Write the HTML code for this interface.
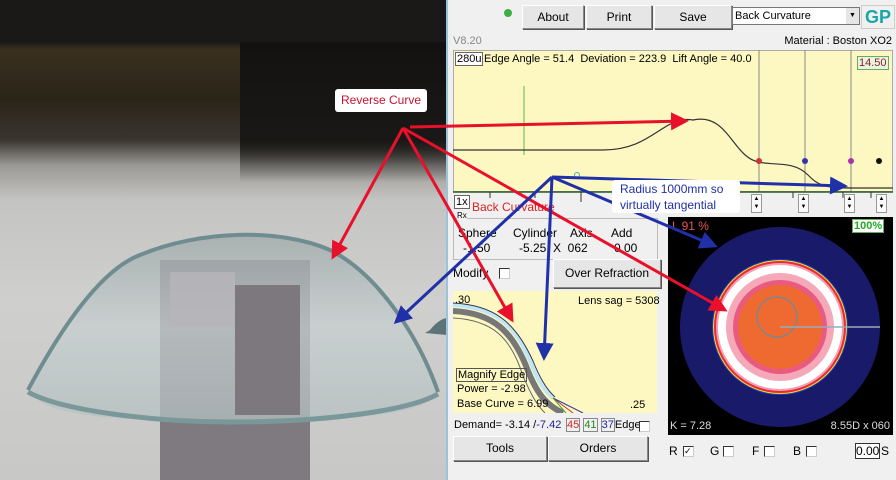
<!DOCTYPE html>
<html><head><meta charset="utf-8"><style>
body{margin:0;width:896px;height:480px;overflow:hidden;background:#f0f0f0;font-family:"Liberation Sans",sans-serif;position:relative}
.a{position:absolute}
.btn{position:absolute;background:#e6e6e6;border:1px solid #fff;border-right-color:#888;border-bottom-color:#888;box-shadow:1px 1px 0 #555;font-size:12px;text-align:center;color:#000}
.t{position:absolute;font-size:11px;color:#000;white-space:nowrap}
.cb{position:absolute;width:9px;height:9px;border:1px solid #333;border-right-color:#ccc;border-bottom-color:#ccc;background:#fff}
.sp{position:absolute;width:9px;height:17px;background:#fafafa;border:1px solid #999;font-size:6px;line-height:8px;text-align:center}
</style></head><body>
<!-- photo -->
<div class="a" style="left:0;top:0;width:447px;height:480px;background:linear-gradient(180deg,#1b1917 0,#1b1917 42px,#3a3020 50px,#2a2418 100px,#3a3630 140px,#9a9894 165px,#c4c4c2 200px,#cfcfcd 300px,#c8c8c6 480px)"></div>
<div class="a" style="left:240px;top:42px;width:207px;height:140px;background:linear-gradient(180deg,#141210,#1a1816 70%,rgba(60,60,60,0))"></div>
<svg class="a" style="left:0;top:0" width="447" height="480">
<defs><linearGradient id="dm" x1="0" y1="0" x2="0" y2="1"><stop offset="0" stop-color="#9fa9aa"/><stop offset=".5" stop-color="#c6cfd0"/><stop offset="1" stop-color="#b5c0c1"/></linearGradient></defs>
<rect x="160" y="260" width="150" height="220" fill="#7f7a80"/>
<path d="M28 390 C60 330 100 270 140 255 C200 230 280 228 330 250 C380 275 420 340 438 392 C430 410 380 418 300 420 L160 420 C80 418 40 410 28 390Z" fill="url(#dm)" opacity=".75"/>
<path d="M28 390 C60 330 100 270 140 255 C200 230 280 228 330 250 C380 275 420 340 438 392" fill="none" stroke="#6f8c90" stroke-width="4"/>
<path d="M28 392 C60 410 150 422 230 422 C330 422 410 410 438 394" fill="none" stroke="#7a989a" stroke-width="5"/>
<rect x="170" y="272" width="65" height="55" fill="#b7b5ba" opacity=".8"/>
<rect x="235" y="285" width="65" height="130" fill="#7d787e"/>
<path d="M430 330 C438 320 445 318 447 318 L447 335 L425 333Z" fill="#5c7478"/>
</svg>
<div class="a" style="left:446px;top:0;width:2px;height:480px;background:#9cc3d9"></div>
<!-- software panel -->
<div class="a" style="left:504px;top:9px;width:8px;height:8px;border-radius:50%;background:#3cb043"></div>
<div class="btn" style="left:522px;top:5px;width:60px;height:22px;line-height:22px">About</div>
<div class="btn" style="left:586px;top:5px;width:64px;height:22px;line-height:22px">Print</div>
<div class="btn" style="left:654px;top:5px;width:76px;height:22px;line-height:22px">Save</div>
<div class="a" style="left:732px;top:7px;width:124px;height:16px;background:#fff;border:1px solid #777;font-size:11px;line-height:16px;padding-left:2px">Back Curvature<span style="position:absolute;right:0;top:0;width:13px;height:16px;background:#e6e6e6;font-size:7px;text-align:center">▼</span></div>
<div class="a" style="left:861px;top:5px;width:32px;height:22px;border:1px solid #ccc;color:#1aa6a6;font-weight:bold;font-size:18px;line-height:22px;text-align:center">GP</div>
<div class="t" style="left:453px;top:35px;color:#888">V8.20</div>
<div class="t" style="right:4px;top:35px">Material : Boston XO2</div>
<!-- graph -->
<div class="a" style="left:453px;top:50px;width:440px;height:142px;background:#fdf8c2;border:1px solid #aaa;box-sizing:border-box"></div>
<svg class="a" style="left:453px;top:50px" width="440" height="165">
<line x1="71" y1="36" x2="71" y2="105" stroke="#8fd06f" stroke-width="1.5"/>
<line x1="306" y1="0" x2="306" y2="142" stroke="#888"/><line x1="352" y1="0" x2="352" y2="142" stroke="#888"/><line x1="398" y1="0" x2="398" y2="142" stroke="#888"/>
<path d="M0 100 L150 100 C200 100 210 65 240 70 C275 62 280 108 306 112 C320 116 340 110 355 125 C365 135 370 138 400 138 L440 138" fill="none" stroke="#333" stroke-width="1.2"/>
<circle cx="306" cy="111" r="3" fill="#c33"/><circle cx="352" cy="111" r="3" fill="#33a"/><circle cx="398" cy="111" r="3" fill="#a3a"/><circle cx="426" cy="111" r="3" fill="#111"/>
<circle cx="124" cy="125" r="2.5" fill="none" stroke="#5aa"/>
<line x1="0" y1="142" x2="440" y2="142" stroke="#2a5a2a" stroke-width="1.5"/>
<g stroke="#333"><line x1="37" y1="142" x2="37" y2="148"/><line x1="82" y1="142" x2="82" y2="148"/><line x1="128" y1="142" x2="128" y2="152"/><line x1="340" y1="142" x2="340" y2="148"/><line x1="390" y1="142" x2="390" y2="148"/><line x1="418" y1="142" x2="418" y2="148"/></g>
</svg>
<div class="t" style="left:455px;top:52px;border:1px solid #666;background:#fff;padding:0 1px">280u</div>
<div class="t" style="left:484px;top:53px">Edge Angle = 51.4 &nbsp;Deviation = 223.9 &nbsp;Lift Angle = 40.0</div>
<div class="t" style="left:857px;top:56px;border:1px solid #6a6;background:#e8f4e0;color:#822;padding:0 1px">14.50</div>
<div class="t" style="left:454px;top:195px;border:1px solid #666;background:#fff;padding:0 1px">1x</div>
<div class="t" style="left:472px;top:200px;color:#d22;font-size:12px">Back Curvature</div>
<div class="sp" style="left:751px;top:194px">▲<br>▼</div><div class="sp" style="left:798px;top:194px">▲<br>▼</div><div class="sp" style="left:844px;top:194px">▲<br>▼</div><div class="sp" style="left:876px;top:194px">▲<br>▼</div>
<!-- Rx -->
<div class="a" style="left:453px;top:218px;width:203px;height:40px;border:1px solid #bbb"></div>
<div class="t" style="left:457px;top:211px;font-size:8px;background:#f0f0f0">Rx</div>
<div class="t" style="left:458px;top:226px;font-size:12px">Sphere</div><div class="t" style="left:513px;top:226px;font-size:12px">Cylinder</div><div class="t" style="left:570px;top:226px;font-size:12px">Axis</div><div class="t" style="left:611px;top:226px;font-size:12px">Add</div>
<div class="t" style="left:463px;top:241px;font-size:12px">-1.50</div><div class="t" style="left:519px;top:241px;font-size:12px">-5.25</div><div class="t" style="left:553px;top:241px;font-size:12px">X &nbsp;062</div><div class="t" style="left:614px;top:241px;font-size:12px">0.00</div>
<div class="t" style="left:453px;top:266px;font-size:12px">Modify</div><div class="cb" style="left:499px;top:268px"></div>
<div class="btn" style="left:553px;top:259px;width:106px;height:27px;line-height:27px">Over Refraction</div>
<!-- magnify -->
<div class="a" style="left:453px;top:291px;width:204px;height:122px;background:#fdf8c2"></div>
<svg class="a" style="left:453px;top:291px" width="204" height="122">
<path d="M0 20 C40 22 60 40 75 80 C85 105 95 115 110 122" fill="none" stroke="#777" stroke-width="6"/>
<path d="M0 14 C40 16 62 32 78 72 C86 92 92 100 100 107" fill="none" stroke="#bfe6f2" stroke-width="4"/>
<path d="M0 12 C40 14 62 30 80 70 C88 90 95 100 102 106" fill="none" stroke="#335" stroke-width="1"/>
<path d="M0 27 C40 29 58 47 70 85 C80 108 85 115 92 122" fill="none" stroke="#666" stroke-width="1"/>
<path d="M100 107 L130 122 M100 107 L120 122 M100 107 L112 122 M100 107 L104 122" stroke-width="1" fill="none"/>
<line x1="100" y1="107" x2="130" y2="122" stroke="#33a"/><line x1="100" y1="107" x2="120" y2="122" stroke="#c33"/><line x1="100" y1="107" x2="113" y2="122" stroke="#3a3"/>
</svg>
<div class="t" style="left:455px;top:294px">.30</div>
<div class="t" style="left:578px;top:295px">Lens sag = 5308</div>
<div class="t" style="left:456px;top:368px;border:1px solid #555;padding:0 1px">Magnify Edge</div>
<div class="t" style="left:457px;top:383px">Power = -2.98</div>
<div class="t" style="left:457px;top:398px">Base Curve = 6.99</div>
<div class="t" style="left:630px;top:399px">.25</div>
<div class="t" style="left:454px;top:419px">Demand= -3.14 /<span style="color:#228">-7.42</span></div>
<div class="t" style="left:566px;top:419px"><span style="color:#d22;border:1px solid #888">45</span> <span style="color:#282;border:1px solid #888">41</span> <span style="color:#22a;border:1px solid #888">37</span>Edge</div>
<div class="cb" style="left:639px;top:421px"></div>
<div class="btn" style="left:453px;top:436px;width:92px;height:23px;line-height:23px">Tools</div>
<div class="btn" style="left:548px;top:436px;width:98px;height:23px;line-height:23px">Orders</div>
<!-- topo -->
<div class="a" style="left:668px;top:217px;width:225px;height:218px;background:#000;overflow:hidden">
<svg width="225" height="218"><g transform="translate(112,110)">
<circle r="100" fill="#1a1a6a"/><circle r="68" fill="#1c3cc0"/><circle r="67" fill="#f0e020"/><circle r="66" fill="#e8283c"/><circle r="64" fill="#f4a0b0"/><circle r="62" fill="#fff"/><circle r="54" fill="#f4a8b8"/><circle r="47" fill="#e85a80"/><circle r="42" fill="#ee6a30"/><circle cx="-3" cy="-10" r="20" fill="none" stroke="#6a8aa0" stroke-width="1.2"/><line x1="0" y1="0" x2="100" y2="0" stroke="#9ab" stroke-width="1.5"/></g></svg></div>
<div class="t" style="left:672px;top:219px;color:#e55;font-size:12px">L 91 %</div>
<div class="t" style="left:852px;top:219px;color:#2a2;background:#fff;font-weight:bold;border:1px solid #6a6;padding:0 1px">100%</div>
<div class="t" style="left:670px;top:420px;color:#ddd">K = 7.28</div>
<div class="t" style="right:6px;top:420px;color:#ddd">8.55D x 060</div>
<div class="t" style="left:669px;top:444px;font-size:12px">R</div><div class="cb" style="left:683px;top:446px;font-size:9px;line-height:9px">✓</div>
<div class="t" style="left:710px;top:444px;font-size:12px">G</div><div class="cb" style="left:723px;top:446px"></div>
<div class="t" style="left:752px;top:444px;font-size:12px">F</div><div class="cb" style="left:764px;top:446px"></div>
<div class="t" style="left:793px;top:444px;font-size:12px">B</div><div class="cb" style="left:806px;top:446px"></div>
<div class="t" style="left:855px;top:443px;font-size:12px;border:1px solid #333;background:#fff">0.00</div><div class="t" style="left:881px;top:444px;font-size:12px">S</div>
<!-- annotations -->
<svg class="a" style="left:0;top:0" width="896" height="480">
<defs><marker id="ar" markerWidth="6" markerHeight="6" refX="5" refY="3" orient="auto"><path d="M0 0L6 3L0 6Z" fill="#e8102a"/></marker>
<marker id="ab" markerWidth="6" markerHeight="6" refX="5" refY="3" orient="auto"><path d="M0 0L6 3L0 6Z" fill="#2030a8"/></marker></defs>
<g stroke="#e8102a" stroke-width="3" marker-end="url(#ar)" fill="none">
<line x1="403" y1="128" x2="333" y2="257"/><line x1="410" y1="127" x2="686" y2="121"/><line x1="403" y1="128" x2="725" y2="310"/><line x1="403" y1="128" x2="512" y2="320"/></g>
<g stroke="#2030a8" stroke-width="3" marker-end="url(#ab)" fill="none">
<line x1="552" y1="177" x2="396" y2="322"/><line x1="552" y1="177" x2="544" y2="358"/><line x1="552" y1="177" x2="715" y2="246"/><line x1="552" y1="177" x2="845" y2="186"/></g>
</svg>
<div class="a" style="left:335px;top:89px;width:92px;height:23px;background:#fff;border-radius:3px;color:#c8102e;font-size:12px;line-height:23px;text-align:center">Reverse Curve</div>
<div class="a" style="left:612px;top:180px;width:128px;height:33px;background:#fff;border-radius:3px;color:#2030a8;font-size:12px;line-height:16px;padding:1px 0 0 8px;box-sizing:border-box">Radius 1000mm so<br>virtually tangential</div>
</body></html>
